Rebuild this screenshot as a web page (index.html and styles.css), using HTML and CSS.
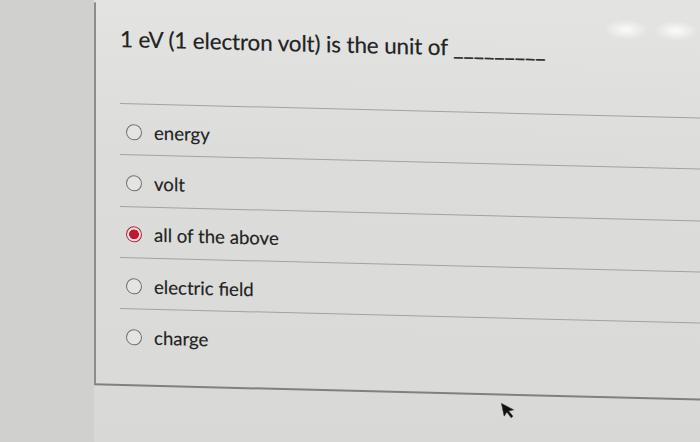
FILE: index.html
```html
<!DOCTYPE html>
<html>
<head>
<meta charset="utf-8">
<link rel="stylesheet" href="styles.css">
</head>
<body>
<div class="screen">
  <div class="panel">
    <div class="question">1 eV (1 electron volt) is the unit of <span class="blank">_________</span></div>
    <ul class="options">
      <li class="option"><span class="radio"></span><span class="label">energy</span></li>
      <li class="option"><span class="radio"></span><span class="label">volt</span></li>
      <li class="option"><span class="radio checked"></span><span class="label">all of the above</span></li>
      <li class="option"><span class="radio"></span><span class="label">electric field</span></li>
      <li class="option"><span class="radio"></span><span class="label">charge</span></li>
    </ul>
  </div>
</div>
<svg class="cursor" width="14" height="18" viewBox="0 0 14 18"><path d="M1 1 L1 14 L4.5 10.5 L7.5 17 L9.5 16 L6.5 9.8 L11.5 9.8 Z" fill="#111" stroke="#333" stroke-width="0.6"/></svg>
</body>
</html>
```
FILE: styles.css
```css
html, body {
  margin: 0;
  padding: 0;
  width: 700px;
  height: 442px;
  overflow: hidden;
}
body {
  background:
    linear-gradient(90deg, #d0d0ce 0 94px, rgba(0,0,0,0) 94px),
    linear-gradient(180deg, #e3e3e1 0%, #d8d8d6 100%);
  font-family: Lato, "Open Sans", sans-serif;
  color: #222;
  position: relative;
}
.screen {
  width: 700px;
  height: 420px;
  transform: skewY(1.43deg);
  transform-origin: 0 0;
  padding-left: 94px;
  box-sizing: border-box;
}
.panel {
  height: 383px;
  box-sizing: border-box;
  border-left: 2px solid #8c8c8c;
  border-bottom: 2px solid #808080;
  background:
    radial-gradient(ellipse 22px 10px at 530px 14px, rgba(255,255,255,0.85), rgba(255,255,255,0) 100%),
    radial-gradient(ellipse 22px 10px at 580px 14px, rgba(255,255,255,0.85), rgba(255,255,255,0) 100%),
    linear-gradient(180deg, #e3e3e1 0%, #dcdcda 40%, #dadad8 100%);
  padding-left: 24px;
}
.question {
  font-size: 22.4px;
  line-height: 26px;
  padding-top: 23px;
  height: 101px;
  box-sizing: border-box;
  border-bottom: 1px solid #a2a2a0;
  letter-spacing: -0.1px;
  -webkit-text-stroke: 0.2px #222;
}
.blank {
  color: #333;
  letter-spacing: 0;
}
.options {
  list-style: none;
  margin: 0;
  padding: 0;
}
.option {
  display: flex;
  align-items: center;
  height: 51.3px;
  box-sizing: border-box;
  padding-top: 5px;
  border-bottom: 1px solid #a2a2a0;
  font-size: 18.6px;
  -webkit-text-stroke: 0.15px #222;
}
.option:last-child {
  border-bottom: none;
}
.radio {
  width: 16px;
  height: 16px;
  box-sizing: border-box;
  border: 1.7px solid #707070;
  border-radius: 50%;
  background: #e4e4e2;
  margin-left: 6px;
  margin-right: 12px;
  flex: none;
}
.radio.checked {
  border: 1.7px solid #b02a3a;
  background: radial-gradient(circle, #c0182e 0 4.6px, #e6dcdc 5.1px);
}
.label {
  line-height: 20px;
}
.cursor {
  position: absolute;
  left: 502px;
  top: 401px;
  transform: rotate(-12deg);
}
```
